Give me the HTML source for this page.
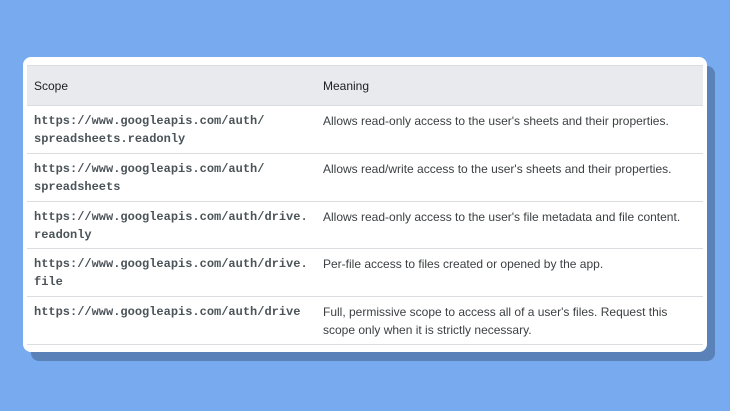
<!DOCTYPE html>
<html><head><style>
html,body{margin:0;padding:0}
body{width:730px;height:411px;background:#77aaee;position:relative;overflow:hidden;font-family:"Liberation Sans",sans-serif}
.sh{position:absolute;left:31px;top:66px;width:684px;height:295px;background:#5a82b8;border-radius:8px}
.card{position:absolute;left:23px;top:57px;width:684px;height:295px;background:#fff;border-radius:8px}
table{position:absolute;left:4px;top:8px;width:676px;border-collapse:collapse}
th{background:#e8eaed;height:39px;text-align:left;font-weight:normal;font-size:12px;color:#202124;padding:0 0 0 7px;border-top:1px solid #dadce0;border-bottom:1px solid #dadce0}
td{vertical-align:top;padding:6px 0 0 7px;box-sizing:border-box;border-bottom:1px solid #dadce0;font-size:12px;line-height:18px;color:#3c4043}
tr.r td{height:47.75px}
td.m{font-family:"Liberation Mono",monospace;color:#4a5358;font-weight:bold;font-size:12px}
td.c1,th.c1{width:282px}
</style></head><body>
<div class="sh"></div>
<div class="card">
<table>
<tr><th class="c1">Scope</th><th>Meaning</th></tr>
<tr class="r"><td class="m c1">https://www.googleapis.com/auth/<br>spreadsheets.readonly</td><td>Allows read-only access to the user's sheets and their properties.</td></tr>
<tr class="r"><td class="m c1">https://www.googleapis.com/auth/<br>spreadsheets</td><td>Allows read/write access to the user's sheets and their properties.</td></tr>
<tr class="r"><td class="m c1">https://www.googleapis.com/auth/drive.<br>readonly</td><td>Allows read-only access to the user's file metadata and file content.</td></tr>
<tr class="r"><td class="m c1">https://www.googleapis.com/auth/drive.<br>file</td><td>Per-file access to files created or opened by the app.</td></tr>
<tr class="r"><td class="m c1">https://www.googleapis.com/auth/drive</td><td>Full, permissive scope to access all of a user's files. Request this<br>scope only when it is strictly necessary.</td></tr>
</table>
</div>
</body></html>
